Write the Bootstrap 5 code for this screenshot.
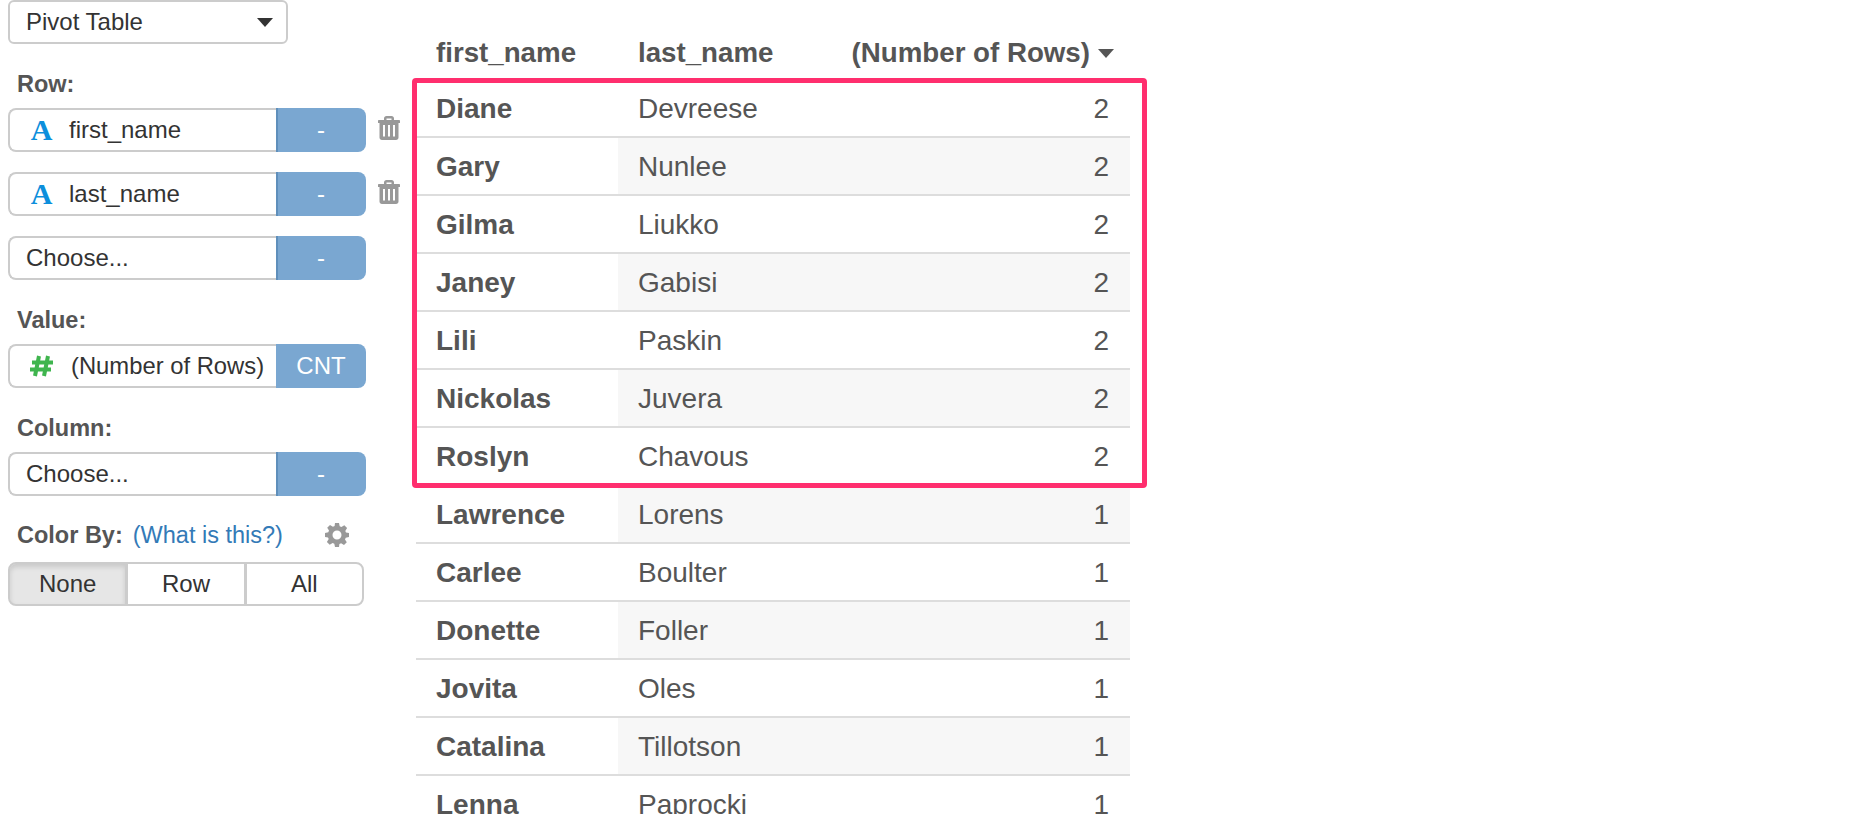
<!DOCTYPE html>
<html lang="en">
<head>
<meta charset="utf-8">
<title>Pivot Table</title>
<link rel="stylesheet" href="https://cdn.jsdelivr.net/npm/bootstrap@5.3.0/dist/css/bootstrap.min.css">
<style>
html,body{height:814px;overflow:hidden;background:#fff;}
body{font-family:"Liberation Sans",Arial,sans-serif;color:#555;}
.side-pane{flex:0 0 416px;padding:0 0 0 8px;}
.type-select{width:280px;height:44px;border:2px solid #ccc;border-radius:6px;background:#fff;color:#333;font-size:24px;line-height:1;padding:0 13px 0 16px;}
.type-select .arrow{width:16px;height:9px;fill:#333;}
.ctl-label{font-size:23.5px;font-weight:700;line-height:24px;color:#555;margin:28px 0 12px 9px;}
.field-line{margin-bottom:20px;gap:12px;}
.field-group{width:359px;height:44px;flex:0 0 359px;flex-wrap:nowrap;}
.field-name{flex:0 0 269px;width:269px;height:44px;background:#fff;border:2px solid #ccc;border-right:0;border-radius:8px 0 0 8px;color:#333;font-size:24px;padding:0 0 0 16px;}
.field-name.has-icon{padding-left:20px;}
.field-name .measure{font-size:23.8px;}
.field-act{flex:0 0 90px;width:90px;height:44px;background:#7aa7d1;border:0;border-left:2px solid #5f8fbb;border-radius:0 8px 8px 0;color:#fff;font-size:24px;padding:0 2px 0 0;line-height:1;}
.field-act.plain{border-left-color:#7aa7d1;}
.glyph-a{font-family:"Liberation Serif",serif;font-weight:700;font-size:30px;color:#0d8fdc;width:23px;line-height:1;margin-right:16px;text-align:center;}
.glyph-hash{width:23px;height:22px;margin-right:18px;stroke:#3fb54e;stroke-width:4;fill:none;}
.bin{width:22px;height:24px;margin-top:-4px;margin-left:-1px;fill:#999;}
.cb-row{height:24px;font-size:23.5px;line-height:24px;margin:27px 0 15px 9px;}
.cb-row b{color:#555;margin-right:10px;}
.cb-row a{color:#337ab7;text-decoration:none;font-size:23.5px;}
.cog{width:24px;height:24px;margin-left:42px;fill:#999;}
.seg-group{width:356px;height:44px;}
.seg-group .btn{flex:0 0 auto;width:119.33px;background:#fff;border:2px solid #ccc;color:#333;font-size:24px;line-height:1;padding:0;}
.seg-group .btn+.btn{margin-left:-2px;}
.seg-group .btn.on{background:#e6e6e6;box-shadow:inset 0 3px 5px rgba(0,0,0,.125);}
.seg-group .btn:first-child{border-radius:8px 0 0 8px;}
.seg-group .btn:last-child{border-radius:0 8px 8px 0;}
.data-pane{width:714px;}
.pivot-tbl{width:714px;margin:0;border-collapse:separate;border-spacing:0;table-layout:fixed;font-size:28px;color:#555;}
.pivot-tbl>thead>tr>th{height:80px;padding:26px 20px 0;border:0;font-size:27.7px;font-weight:700;vertical-align:middle;color:#555;line-height:28px;white-space:nowrap;}
.pivot-tbl>thead>tr>th.num{padding-right:16px;text-align:right;}
.pivot-tbl>tbody>tr>td{height:58px;padding:2px 20px 0;border:0;border-bottom:2px solid #ddd;vertical-align:middle;color:#555;line-height:28px;background:#fff;box-shadow:none;}
.pivot-tbl>tbody>tr>td.num{padding-right:21px;}
.pivot-tbl>tbody>tr>td:first-child{font-weight:700;}
.pivot-tbl>tbody>tr:nth-child(even)>td:not(:first-child){background:#f7f7f7;}
.pivot-tbl .num{text-align:right;}
.sort-caret{width:16px;height:9px;fill:#555;margin-left:8px;vertical-align:4px;}
.hilite{position:absolute;left:-4px;top:78px;width:735px;height:410px;border:5.5px solid #ff2e6e;border-radius:4px;pointer-events:none;}
</style>
</head>
<body>
<div class="d-flex align-items-start">
  <div class="side-pane">
    <button class="type-select d-flex align-items-center justify-content-between" type="button">
      <span>Pivot Table</span>
      <svg class="arrow" viewBox="0 0 16 9"><path d="M0 0h16L8 9z"/></svg>
    </button>

    <div class="ctl-label">Row:</div>
    <div class="field-line d-flex align-items-center">
      <div class="input-group field-group">
        <div class="field-name has-icon d-flex align-items-center"><span class="glyph-a">A</span>first_name</div>
        <button class="field-act" type="button">-</button>
      </div>
      <svg class="bin" viewBox="0 0 22 24"><path fill-rule="evenodd" d="M6 4V2.500C6 1 7 0 8.500 0h5C15 0 16 1 16 2.500V4h5c.6 0 1 .4 1 1v2h-1.500v14.500c0 1.500-1 2.500-2.500 2.500H4c-1.500 0-2.500-1-2.500-2.500V7H0V5c0-.6.4-1 1-1zM8.500 4h5V2.500h-5zM5 9v11.500h2V9zM10 9v11.500h2V9zM15 9v11.500h2V9z"/></svg>
    </div>
    <div class="field-line d-flex align-items-center">
      <div class="input-group field-group">
        <div class="field-name has-icon d-flex align-items-center"><span class="glyph-a">A</span>last_name</div>
        <button class="field-act" type="button">-</button>
      </div>
      <svg class="bin" viewBox="0 0 22 24"><path fill-rule="evenodd" d="M6 4V2.500C6 1 7 0 8.500 0h5C15 0 16 1 16 2.500V4h5c.6 0 1 .4 1 1v2h-1.500v14.500c0 1.500-1 2.500-2.500 2.500H4c-1.500 0-2.500-1-2.500-2.500V7H0V5c0-.6.4-1 1-1zM8.500 4h5V2.500h-5zM5 9v11.500h2V9zM10 9v11.500h2V9zM15 9v11.500h2V9z"/></svg>
    </div>
    <div class="field-line d-flex align-items-center mb-0">
      <div class="input-group field-group">
        <div class="field-name d-flex align-items-center">Choose...</div>
        <button class="field-act" type="button">-</button>
      </div>
    </div>

    <div class="ctl-label">Value:</div>
    <div class="field-line d-flex align-items-center mb-0">
      <div class="input-group field-group">
        <div class="field-name has-icon d-flex align-items-center"><svg class="glyph-hash" viewBox="0 0 23 22"><path d="M9 1 5 21M18 1 14 21M2 7.500h21M0 14.500h21"/></svg><span class="measure">(Number of Rows)</span></div>
        <button class="field-act plain" type="button">CNT</button>
      </div>
    </div>

    <div class="ctl-label">Column:</div>
    <div class="field-line d-flex align-items-center mb-0">
      <div class="input-group field-group">
        <div class="field-name d-flex align-items-center">Choose...</div>
        <button class="field-act" type="button">-</button>
      </div>
    </div>

    <div class="cb-row d-flex align-items-center">
      <b>Color By:</b>
      <a href="#">(What is this?)</a>
      <svg class="cog" viewBox="0 0 24 24"><path fill-rule="evenodd" d="M10 0h4l.7 3.300 1.700.7 2.900-1.800 2.800 2.800-1.800 2.900.7 1.700L24 10v4l-3.300.7-.7 1.700 1.800 2.900-2.800 2.800-2.900-1.800-1.700.7L14 24h-4l-.7-3.300-1.700-.7-2.900 1.800-2.800-2.800 1.800-2.900-.7-1.700L0 14v-4l3.300-.7.7-1.700-1.800-2.900 2.800-2.800 2.900 1.800 1.700-.7zM12 7.500a4.500 4.500 0 1 0 0 9 4.500 4.500 0 0 0 0-9z"/></svg>
    </div>
    <div class="btn-group seg-group" role="group">
      <button class="btn on" type="button">None</button>
      <button class="btn" type="button">Row</button>
      <button class="btn" type="button">All</button>
    </div>
  </div>

  <div class="data-pane position-relative">
    <table class="table pivot-tbl">
      <colgroup><col style="width:202px"><col style="width:200px"><col></colgroup>
      <thead>
        <tr><th>first_name</th><th>last_name</th><th class="num">(Number of Rows)<svg class="sort-caret" viewBox="0 0 16 9"><path d="M0 0h16L8 9z"/></svg></th></tr>
      </thead>
      <tbody>
        <tr><td>Diane</td><td>Devreese</td><td class="num">2</td></tr>
        <tr><td>Gary</td><td>Nunlee</td><td class="num">2</td></tr>
        <tr><td>Gilma</td><td>Liukko</td><td class="num">2</td></tr>
        <tr><td>Janey</td><td>Gabisi</td><td class="num">2</td></tr>
        <tr><td>Lili</td><td>Paskin</td><td class="num">2</td></tr>
        <tr><td>Nickolas</td><td>Juvera</td><td class="num">2</td></tr>
        <tr><td>Roslyn</td><td>Chavous</td><td class="num">2</td></tr>
        <tr><td>Lawrence</td><td>Lorens</td><td class="num">1</td></tr>
        <tr><td>Carlee</td><td>Boulter</td><td class="num">1</td></tr>
        <tr><td>Donette</td><td>Foller</td><td class="num">1</td></tr>
        <tr><td>Jovita</td><td>Oles</td><td class="num">1</td></tr>
        <tr><td>Catalina</td><td>Tillotson</td><td class="num">1</td></tr>
        <tr><td>Lenna</td><td>Paprocki</td><td class="num">1</td></tr>
      </tbody>
    </table>
    <div class="hilite"></div>
  </div>
</div>
<script src="https://cdn.jsdelivr.net/npm/bootstrap@5.3.0/dist/js/bootstrap.bundle.min.js"></script>
</body>
</html>
